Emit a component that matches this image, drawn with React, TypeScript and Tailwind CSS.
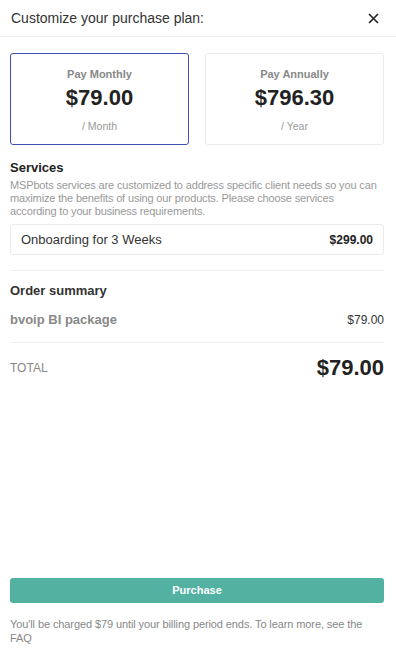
import React from 'react';

const plans = [
  { label: 'Pay Monthly', price: '$79.00', per: '/ Month', active: true },
  { label: 'Pay Annually', price: '$796.30', per: '/ Year', active: false },
];

export default function App() {
  return (
    <div
      className="flex flex-col h-[657px] bg-white text-[#333]"
      style={{ fontFamily: '"Liberation Sans", Arial, sans-serif' }}
    >
      {/* Header */}
      <div className="flex items-center justify-between h-[37px] pl-[11px] pr-[17px] border-b border-[#eeeeee]">
        <h1 className="text-[14px] text-[#333]">Customize your purchase plan:</h1>
        <button className="text-[#222]">
          <svg width="11" height="11" viewBox="0 0 11 11" fill="none" stroke="currentColor" strokeWidth="1.6">
            <path d="M1 1 L10 10 M10 1 L1 10" />
          </svg>
        </button>
      </div>

      <div className="flex flex-col flex-1 pl-[10px] pr-[12px] pt-[16px] pb-[12px]">
        {/* Plans */}
        <div className="grid grid-cols-2 gap-[16px]">
          {plans.map((p) => (
            <div
              key={p.label}
              className={`h-[92px] rounded-[3px] flex flex-col items-center pt-[13px] ${
                p.active ? 'border-[1.5px] border-[#3f51b5]' : 'border border-[#ebebeb]'
              }`}
            >
              <span className="text-[11px] font-bold text-[#888] leading-[14px]">{p.label}</span>
              <span className="text-[22px] font-bold text-[#222] leading-[26px] mt-[4px]">{p.price}</span>
              <span className="text-[10.5px] text-[#999] leading-[14px] mt-[8px]">{p.per}</span>
            </div>
          ))}
        </div>

        {/* Services */}
        <h2 className="text-[13px] font-bold text-[#222] mt-[15px] leading-[16px]">Services</h2>
        <p className="text-[11px] text-[#999] leading-[13px] mt-[3px] tracking-[-0.15px]">
          MSPbots services are customized to address specific client needs so you can maximize the
          benefits of using our products. Please choose services
          <br />
          according to your business requirements.
        </p>
        <div className="flex items-center justify-between h-[31px] mt-[6px] px-[10px] border border-[#ebebeb] rounded-[3px]">
          <span className="text-[13px] text-[#333]">Onboarding for 3 Weeks</span>
          <span className="text-[12px] font-bold text-[#222]">$299.00</span>
        </div>

        <div className="border-t border-[#eeeeee] mt-[15px]" />

        {/* Order summary */}
        <h2 className="text-[13px] font-bold text-[#333] mt-[12px] leading-[16px]">Order summary</h2>
        <div className="flex items-center justify-between mt-[13px] leading-[16px]">
          <span className="text-[13px] font-bold text-[#888]">bvoip BI package</span>
          <span className="text-[12px] text-[#333]">$79.00</span>
        </div>
        <div className="border-t border-[#eeeeee] mt-[14px]" />
        <div className="flex items-center justify-between mt-[12px]">
          <span className="text-[12px] text-[#888]">TOTAL</span>
          <span className="text-[22px] font-bold text-[#222] leading-[26px]">$79.00</span>
        </div>

        <div className="flex-1" />

        <button className="h-[25px] w-full rounded-[3px] bg-[#52b1a1] text-white text-[11px] font-bold">
          Purchase
        </button>
        <p className="text-[11px] text-[#888] leading-[14px] mt-[14px] tracking-[-0.1px]">
          You'll be charged $79 until your billing period ends. To learn more, see the FAQ
        </p>
      </div>
    </div>
  );
}
